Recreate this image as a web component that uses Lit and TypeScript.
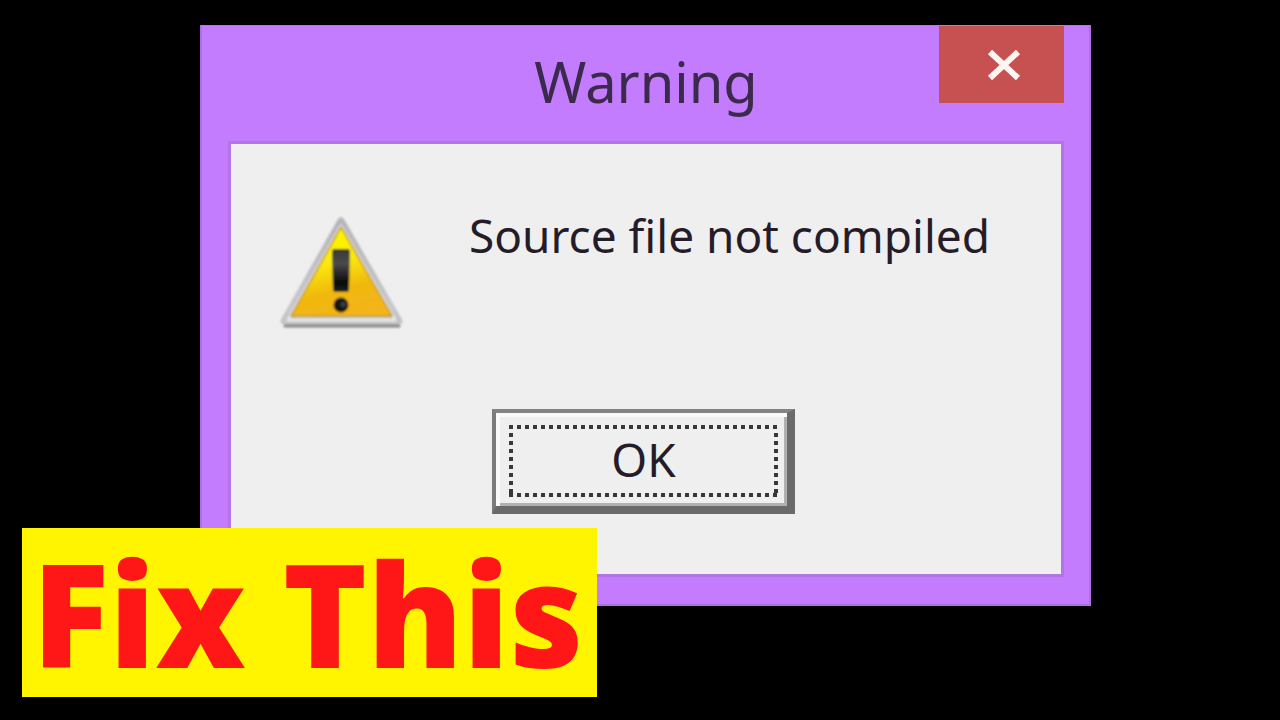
import { LitElement, html, css, svg } from "lit";
import { customElement } from "lit/decorators.js";

const warningIcon = svg`
  <defs>
    <linearGradient id="fill" x1="0.3" y1="0" x2="0.6" y2="1">
      <stop offset="0" stop-color="#fffa00"/>
      <stop offset="0.4" stop-color="#fbe80a"/>
      <stop offset="0.7" stop-color="#f0b80c"/>
      <stop offset="1" stop-color="#f5b41c"/>
    </linearGradient>
    <linearGradient id="rim" x1="0" y1="0" x2="0" y2="1">
      <stop offset="0" stop-color="#b4b4ba"/>
      <stop offset="0.85" stop-color="#c6c6cc"/>
      <stop offset="1" stop-color="#c4c4c4"/>
    </linearGradient>
    <linearGradient id="mark" x1="0" y1="0" x2="0" y2="1">
      <stop offset="0" stop-color="#3a3a32"/>
      <stop offset="0.35" stop-color="#4a4a4c"/>
      <stop offset="0.8" stop-color="#050505"/>
      <stop offset="1" stop-color="#24282c"/>
    </linearGradient>
    <radialGradient id="dot" cx="0.65" cy="0.45" r="0.6">
      <stop offset="0" stop-color="#4c5358"/>
      <stop offset="0.5" stop-color="#101010"/>
      <stop offset="1" stop-color="#1c1804"/>
    </radialGradient>
    <filter id="soft" x="-10%" y="-10%" width="120%" height="120%"><feGaussianBlur stdDeviation="1.2"/></filter>
  </defs>
  <g filter="url(#soft)">
    <path d="M8 108H118L120 111H6Z" fill="#777" stroke="#888" stroke-width="3" stroke-linejoin="round"/>
    <path d="M62 6L120 106H5Z" fill="url(#rim)" stroke="url(#rim)" stroke-width="7" stroke-linejoin="round"/>
    <path d="M62 11L116 105H9Z" fill="none" stroke="#e6e6ec" stroke-width="3" stroke-linejoin="round"/>
    <path d="M62 12L113 101H12Z" fill="url(#fill)" stroke="#c9a62c" stroke-width="2" stroke-linejoin="round"/>
    <path d="M55 34H69Q71 34 71 37L70 74Q70 77 68 77H56Q54 77 54 74L53 37Q53 34 55 34Z" fill="url(#mark)"/>
    <circle cx="62" cy="90" r="7.5" fill="url(#dot)"/>
  </g>`;

@customElement("app-root")
export class AppRoot extends LitElement {
  static styles = css`
    :host {
      display: block;
      position: relative;
      box-sizing: border-box;
      min-height: 100vh;
      padding: 25px 189px 0 200px;
      overflow: hidden;
      background: #000;
      font-family: "Noto Sans", "Open Sans", sans-serif;
    }
    .dialog {
      box-sizing: border-box;
      padding: 0 25px 27px 26px;
      background: #c27cfd;
      border: 2px solid #ae70e2;
      border-top: 1px solid #b377e8;
    }
    .titlebar {
      display: grid;
      grid-template-columns: 1fr auto 1fr;
      align-items: start;
      height: 115px;
    }
    .title {
      grid-column: 2;
      margin: 15px 0 0;
      font-size: 56px;
      line-height: 80px;
      font-weight: 400;
      color: #3b2a4c;
    }
    .close {
      justify-self: end;
      display: grid;
      place-items: center;
      width: 125px;
      height: 77px;
      margin: 0;
      padding: 1px 0 0 4px;
      box-sizing: border-box;
      border: 0;
      background: #c75050;
    }
    .close svg, .icon { display: block; }
    .body {
      border: 3px solid #b276e4;
      background: #efefef;
      color: #251c28;
      padding: 55px 24px 60px 48px;
    }
    .message {
      display: flex;
      align-items: flex-start;
      gap: 64px;
    }
    .icon {
      flex: none;
      width: 126px;
      height: 116px;
      margin-top: 16px;
    }
    .text {
      margin: 0;
      font-size: 46px;
      line-height: 72px;
      white-space: nowrap;
    }
    .actions {
      display: flex;
      justify-content: center;
      padding: 78px 29px 0 0;
    }
    .ok {
      width: 303px;
      height: 105px;
      box-sizing: border-box;
      padding: 12px 9px 9px 13px;
      border: solid;
      border-width: 4px 8px 8px 4px;
      border-color: #848484 #6a6a6a #6a6a6a #7c7c7c;
      background: #efefef;
      box-shadow: inset 4px 4px 0 #fafafa, inset -3px -3px 0 #b0b0b0;
      color: #251c28;
      font: 400 46px/60px "Noto Sans", sans-serif;
    }
    .focus {
      display: grid;
      place-items: center;
      box-sizing: border-box;
      width: 100%;
      height: 100%;
      padding-bottom: 4px;
      --h: repeating-linear-gradient(90deg, #383838 0 4px, #efefef 4px 8px);
      --v: repeating-linear-gradient(180deg, #383838 0 4px, #efefef 4px 8px);
      background:
        var(--h) top / 100% 4px no-repeat,
        var(--h) bottom / 100% 4px no-repeat,
        var(--v) left / 4px 100% no-repeat,
        var(--v) right / 4px 100% no-repeat;
    }
    .banner {
      position: absolute;
      left: 22px;
      bottom: 23px;
      box-sizing: border-box;
      margin: 0;
      padding: 0 13px 0 10px;
      background: #fff500;
      color: #ff1717;
      font: 800 143px/169px "Open Sans", sans-serif;
      white-space: nowrap;
    }
  `;

  render() {
    return html`
      <section class="dialog" role="alertdialog" aria-labelledby="title" aria-describedby="text">
        <header class="titlebar">
          <h1 class="title" id="title">Warning</h1>
          <button class="close" type="button" aria-label="Close">
            <svg width="36" height="32" viewBox="0 0 36 32" aria-hidden="true">
              <path d="M4 3L32 29M32 3L4 29" fill="none" stroke="#fff5f2" stroke-width="6"/>
            </svg>
          </button>
        </header>
        <div class="body">
          <div class="message">
            <svg class="icon" viewBox="0 0 126 116" aria-hidden="true">${warningIcon}</svg>
            <p class="text" id="text">Source file not compiled</p>
          </div>
          <div class="actions">
            <button class="ok" type="button"><span class="focus">OK</span></button>
          </div>
        </div>
      </section>
      <h2 class="banner">Fix This</h2>
    `;
  }
}
